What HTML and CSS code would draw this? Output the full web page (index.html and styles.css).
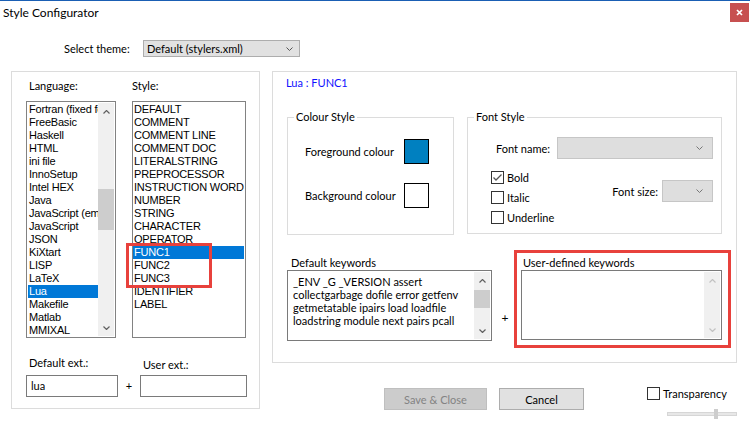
FILE: index.html
```html
<!DOCTYPE html>
<html>
<head>
<meta charset="utf-8">
<title>Style Configurator</title>
<link rel="stylesheet" href="styles.css">
</head>
<body>
<div class="window">
  <div class="titlebar">
    <div class="title">Style Configurator</div>
    <div class="close"><svg width="19" height="19" viewBox="0 0 19 19"><path d="M7 7 L12 12 M12 7 L7 12" stroke="#fff" stroke-width="1.7" fill="none"/></svg></div>
  </div>

  <div class="theme-row">
    <span class="theme-label">Select theme:</span>
    <div class="combo theme-combo"><span>Default (stylers.xml)</span><svg class="chev" width="7" height="4" viewBox="0 0 7 4"><polyline points="0.5,0.5 3.5,3.5 6.5,0.5" fill="none" stroke="#555" stroke-width="1"/></svg></div>
  </div>

  <div class="main">
    <div class="left-group">
      <div class="lists">
        <div class="col-label lang-label">Language:</div>
        <div class="col-label">Style:</div>
        <div class="listbox lang-list">
          <div class="items">
            <div class="item">Fortran (fixed form)</div>
            <div class="item">FreeBasic</div>
            <div class="item">Haskell</div>
            <div class="item">HTML</div>
            <div class="item">ini file</div>
            <div class="item">InnoSetup</div>
            <div class="item">Intel HEX</div>
            <div class="item">Java</div>
            <div class="item">JavaScript (embedded)</div>
            <div class="item">JavaScript</div>
            <div class="item">JSON</div>
            <div class="item">KiXtart</div>
            <div class="item">LISP</div>
            <div class="item">LaTeX</div>
            <div class="item sel">Lua</div>
            <div class="item">Makefile</div>
            <div class="item">Matlab</div>
            <div class="item">MMIXAL</div>
          </div>
          <div class="vscroll">
            <div class="arrow"><svg width="7" height="4" viewBox="0 0 7 4"><polyline points="0.5,3.5 3.5,0.5 6.5,3.5" fill="none" stroke="#606060" stroke-width="1.2"/></svg></div>
            <div class="track"><div class="thumb lang-thumb"></div></div>
            <div class="arrow"><svg width="7" height="4" viewBox="0 0 7 4"><polyline points="0.5,0.5 3.5,3.5 6.5,0.5" fill="none" stroke="#606060" stroke-width="1.2"/></svg></div>
          </div>
        </div>
        <div class="style-wrap">
          <div class="listbox style-list">
            <div class="items">
              <div class="item">DEFAULT</div>
              <div class="item">COMMENT</div>
              <div class="item">COMMENT LINE</div>
              <div class="item">COMMENT DOC</div>
              <div class="item">LITERALSTRING</div>
              <div class="item">PREPROCESSOR</div>
              <div class="item">INSTRUCTION WORD</div>
              <div class="item">NUMBER</div>
              <div class="item">STRING</div>
              <div class="item">CHARACTER</div>
              <div class="item">OPERATOR</div>
              <div class="item sel">FUNC1</div>
              <div class="item">FUNC2</div>
              <div class="item">FUNC3</div>
              <div class="item">IDENTIFIER</div>
              <div class="item">LABEL</div>
            </div>
          </div>
          <div class="mark mark-func"></div>
        </div>
      </div>
      <div class="ext">
        <div class="ext-label">Default ext.:</div>
        <div></div>
        <div class="ext-label user">User ext.:</div>
        <div class="input">lua</div>
        <div class="plus">+</div>
        <div class="input"></div>
      </div>
    </div>

    <div class="right-col">
      <div class="panel">
        <div class="heading">Lua : FUNC1</div>
        <div class="groups">
          <fieldset class="group colour-group">
            <legend>Colour Style</legend>
            <div class="colour-grid">
              <span>Foreground colour</span>
              <div class="swatch fg"></div>
              <span>Background colour</span>
              <div class="swatch bg"></div>
            </div>
          </fieldset>
          <fieldset class="group font-group">
            <legend>Font Style</legend>
            <div class="font-inner">
              <div class="fontname-row">
                <span class="lbl">Font name:</span>
                <div class="combo disabled fontname-combo"><span></span><svg class="chev" width="7" height="4" viewBox="0 0 7 4"><polyline points="0.5,0.5 3.5,3.5 6.5,0.5" fill="none" stroke="#777" stroke-width="1"/></svg></div>
              </div>
              <div class="font-lower">
                <div class="checks">
                  <div class="check"><span class="box"><svg width="11" height="11" viewBox="0 0 11 11"><polyline points="1.5,5.5 4,8 9.5,2.5" fill="none" stroke="#555" stroke-width="1.3"/></svg></span><span>Bold</span></div>
                  <div class="check"><span class="box"></span><span>Italic</span></div>
                  <div class="check"><span class="box"></span><span>Underline</span></div>
                </div>
                <div class="fontsize">
                  <span>Font size:</span>
                  <div class="combo disabled fontsize-combo"><span></span><svg class="chev" width="7" height="4" viewBox="0 0 7 4"><polyline points="0.5,0.5 3.5,3.5 6.5,0.5" fill="none" stroke="#777" stroke-width="1"/></svg></div>
                </div>
              </div>
            </div>
          </fieldset>
        </div>
        <div class="keywords">
          <div class="kw-default">
            <div class="kw-label">Default keywords</div>
            <div class="textbox">
              <div class="text">_ENV _G _VERSION assert<br>collectgarbage dofile error getfenv<br>getmetatable ipairs load loadfile<br>loadstring module next pairs pcall</div>
              <div class="vscroll">
                <div class="arrow"><svg width="7" height="4" viewBox="0 0 7 4"><polyline points="0.5,3.5 3.5,0.5 6.5,3.5" fill="none" stroke="#606060" stroke-width="1.2"/></svg></div>
                <div class="track"><div class="thumb kw-thumb"></div></div>
                <div class="arrow"><svg width="7" height="4" viewBox="0 0 7 4"><polyline points="0.5,0.5 3.5,3.5 6.5,0.5" fill="none" stroke="#606060" stroke-width="1.2"/></svg></div>
              </div>
            </div>
          </div>
          <div class="kw-plus">+</div>
          <div class="kw-user">
            <div class="kw-label user-label">User-defined keywords</div>
            <div class="textbox user-box">
              <div class="text"></div>
              <div class="vscroll">
                <div class="arrow"><svg width="7" height="4" viewBox="0 0 7 4"><polyline points="0.5,3.5 3.5,0.5 6.5,3.5" fill="none" stroke="#c2c2c2" stroke-width="1.2"/></svg></div>
                <div class="track"></div>
                <div class="arrow"><svg width="7" height="4" viewBox="0 0 7 4"><polyline points="0.5,0.5 3.5,3.5 6.5,0.5" fill="none" stroke="#c2c2c2" stroke-width="1.2"/></svg></div>
              </div>
            </div>
          </div>
        </div>
      </div>

      <div class="actions">
        <div class="btn save">Save &amp; Close</div>
        <div class="btn cancel">Cancel</div>
        <div class="transp">
          <div class="transp-row"><span class="box"></span><span>Transparency</span></div>
          <div class="slider">
            <div class="seg left"></div>
            <div class="knob"></div>
            <div class="seg right"></div>
          </div>
        </div>
      </div>
    </div>
  </div>
</div>
</body>
</html>
```

FILE: styles.css
```css
* { box-sizing: border-box; }
html, body { margin: 0; padding: 0; }
body {
  width: 750px;
  height: 426px;
  overflow: hidden;
  background: #fff;
  font-family: Lato, "Noto Sans", sans-serif;
  font-size: 11px;
  color: #000;
}

.titlebar {
  display: flex;
  justify-content: space-between;
  align-items: flex-start;
  border-top: 1px solid #1a5fb4;
  height: 25px;
}
.title { padding-left: 3px; line-height: 24px; font-size: 12px; }
.close {
  width: 19px;
  height: 19px;
  margin-top: 2px;
  margin-right: 1px;
  background: #c75050;
  display: flex;
}

.theme-row {
  display: flex;
  align-items: center;
  margin-top: 15px;
  padding-left: 64px;
  height: 17px;
}
.theme-label { width: 79px; }
.combo {
  display: flex;
  align-items: center;
  justify-content: space-between;
  border: 1px solid #adadad;
  background: #e1e1e1;
}
.combo.disabled { border-color: #c6c6c6; background: #dedede; }
.theme-combo { width: 157px; height: 17px; padding: 0 6px 0 3px; }

.main { display: flex; align-items: flex-start; margin-top: 14px; }

/* Left group */
.left-group {
  margin-left: 11px;
  width: 249px;
  height: 338px;
  border: 1px solid #dcdcdc;
  padding: 6px 0 0 14px;
}
.lists {
  display: grid;
  grid-template-columns: 90px 114px;
  column-gap: 16px;
  row-gap: 8px;
}
.col-label { line-height: 15px; }
.lang-label { padding-left: 3px; }
.listbox {
  height: 237px;
  border: 1px solid #828282;
  display: flex;
  overflow: hidden;
  font-family: "Liberation Sans", Arial, sans-serif;
  font-size: 11px;
  letter-spacing: -0.2px;
}
.lang-list { padding: 1px; }
.style-list { padding: 1px 1px 0 0; }
.items { flex: 1; overflow: hidden; min-width: 0; }
.item {
  height: 13px;
  line-height: 13px;
  padding-left: 1px;
  white-space: nowrap;
  overflow: hidden;
}
.item.sel { background: #0078d7; color: #fff; }

.vscroll {
  width: 16px;
  flex: none;
  background: #f0f0f0;
  display: flex;
  flex-direction: column;
}
.arrow {
  height: 17px;
  flex: none;
  display: flex;
  align-items: center;
  justify-content: center;
}
.arrow svg { display: block; }
.track { flex: 1; }
.thumb { background: #cdcdcd; }
.lang-thumb { margin-top: 69px; height: 41px; }
.kw-thumb { margin-top: 1px; height: 18px; }

.style-wrap { position: relative; }
.mark { position: absolute; border: 3px solid #e8413c; }
.mark-func { left: -6px; top: 142px; width: 86px; height: 45px; }

.ext {
  display: grid;
  grid-template-columns: 92px 22px 107px;
  grid-template-rows: 15px 22px;
  row-gap: 5px;
  margin-top: 17px;
}
.ext-label { line-height: 15px; padding-left: 3px; white-space: nowrap; }
.ext-label.user { margin-top: 2px; }
.input {
  height: 22px;
  border: 1px solid #7a7a7a;
  padding-left: 4px;
  line-height: 20px;
}
.plus { text-align: center; line-height: 22px; }

/* Right column */
.right-col { margin-left: 12px; width: 465px; }
.panel {
  height: 292px;
  border: 1px solid #dcdcdc;
  padding: 3px 0 0 14px;
}
.heading { color: #1010ff; line-height: 15px; margin-left: -1px; }
.groups {
  display: flex;
  align-items: flex-start;
  gap: 13px;
  margin-top: 20px;
}
.group {
  margin: 0;
  padding: 0;
  border: 1px solid #dcdcdc;
  min-width: 0;
}
.group legend {
  padding: 0 2px;
  margin-left: 6px;
  line-height: 14px;
}
.colour-group { width: 167px; height: 125px; }
.font-group { width: 255px; height: 124px; }

.colour-grid {
  display: grid;
  grid-template-columns: 99px 25px;
  row-gap: 19px;
  align-items: center;
  padding: 15px 0 0 17px;
}
.swatch { width: 25px; height: 25px; border: 1px solid #000; }
.swatch.fg { background: #0080c0; }
.swatch.bg { background: #fff; }

.font-inner { padding: 13px 8px 0 23px; }
.fontname-row { display: flex; align-items: center; }
.fontname-row .lbl { margin-left: 5px; }
.fontname-combo { margin-left: auto; width: 156px; height: 22px; padding: 0 9px 0 3px; }
.font-lower { display: flex; align-items: flex-start; margin-top: 8px; }
.checks { display: flex; flex-direction: column; }
.check { display: flex; align-items: center; height: 20px; }
.box {
  width: 13px;
  height: 13px;
  flex: none;
  border: 1px solid #333;
  background: #fff;
  margin-right: 3px;
  display: flex;
}
.box svg { display: block; }
.fontsize { margin-left: auto; display: flex; align-items: center; margin-top: 13px; }
.fontsize-combo { width: 51px; height: 22px; margin-left: 4px; padding: 0 9px 0 3px; }

.keywords { display: flex; align-items: flex-start; margin-top: 15px; }
.kw-default { margin-top: 5px; width: 205px; }
.kw-label { line-height: 15px; padding-left: 4px; white-space: nowrap; }
.user-label { padding-left: 2px; }
.textbox {
  border: 1px solid #7a7a7a;
  padding: 1px;
  display: flex;
  height: 71px;
}
.textbox .text {
  flex: 1;
  padding: 3px 4px;
  line-height: 13px;
  white-space: nowrap;
  overflow: hidden;
}
.user-box { height: 70px; }
.kw-plus { width: 22px; padding-left: 4px; text-align: center; margin-top: 60px; line-height: 15px; font-size: 12px; }
.kw-user {
  width: 217px;
  height: 98px;
  border: 3px solid #e8413c;
  padding: 2px 6px 4px 4px;
}

.actions {
  display: flex;
  align-items: flex-start;
  margin-top: 24px;
  padding-left: 112px;
}
.btn {
  height: 22px;
  margin-top: 1px;
  border: 1px solid #adadad;
  background: #e1e1e1;
  display: flex;
  align-items: center;
  justify-content: center;
}
.btn.save { width: 103px; background: #cccccc; border-color: #bfbfbf; color: #838383; }
.btn.cancel { width: 85px; margin-left: 12px; }
.transp { margin-left: auto; width: 90px; display: flex; flex-direction: column; }
.transp-row { display: flex; align-items: center; height: 13px; }
.transp-row .box { margin-right: 3px; }
.slider {
  align-self: flex-end;
  width: 70px;
  height: 10px;
  margin-top: 9px;
  display: flex;
  align-items: center;
}
.seg { height: 4px; background: #e7e7e7; border: 1px solid #d6d6d6; }
.seg.left { width: 47px; border-right: none; }
.seg.right { flex: 1; border-left: none; }
.knob { width: 4px; height: 10px; background: #cdcdcd; }
```
